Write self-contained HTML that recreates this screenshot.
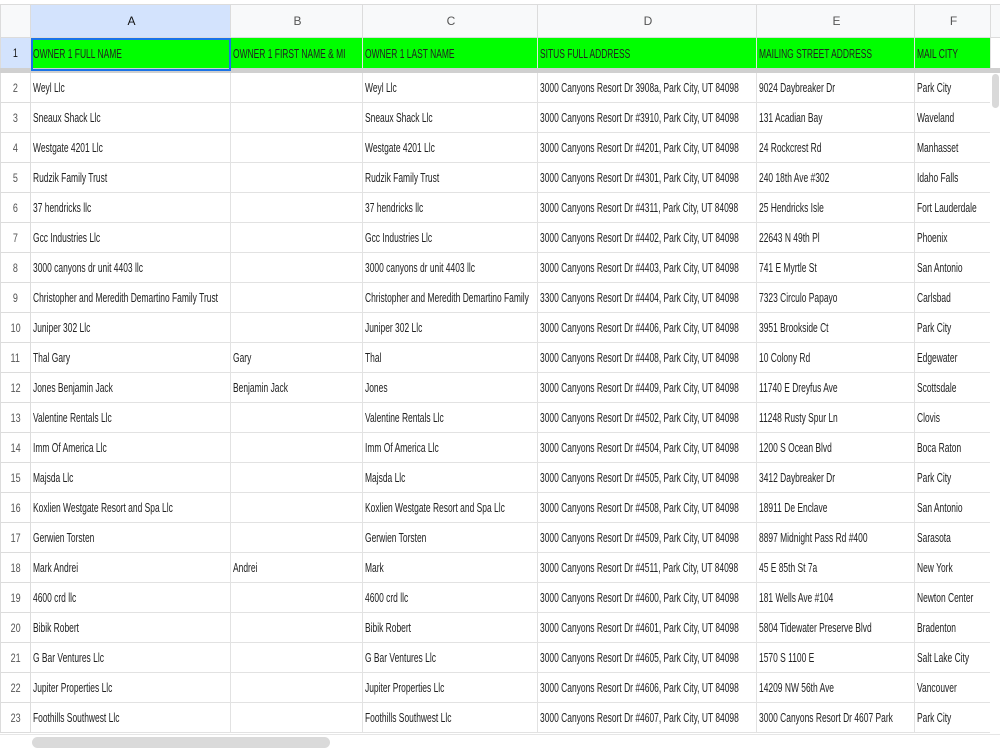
<!DOCTYPE html>
<html><head><style>
body{margin:0;width:1000px;height:750px;overflow:hidden;background:#fff;font-family:"Liberation Sans",sans-serif;font-size:13px;color:#222;position:relative}
table{border-collapse:collapse;table-layout:fixed;position:absolute;left:0;top:4px;width:1000px}
td{border:1px solid #e2e2e2;white-space:nowrap;overflow:hidden;padding:0 0 0 2px;height:29px}
td span{display:inline-block;transform:scaleX(0.65);transform-origin:0 50%}
td.n{text-align:center;color:#555;font-size:12px;background:#fff;padding:0;border-color:#dcdcdc}
td.n span{transform:scaleX(0.75);transform-origin:50% 50%}
tr.h td{background:#f8f9fa;color:#555;text-align:center;font-size:12px;height:32px;border-color:#dcdcdc}
tr.h td.sel{background:#d3e3fd;color:#111}
tr.g td{background:#00ff00;height:30px;border-bottom:5px solid #d0d0d0}
tr.g td.n{background:#d3e3fd;color:#111}
tr.g td.a{outline:2px solid #1a73e8;outline-offset:-2px}
#vs{position:absolute;left:990px;top:73px;width:10px;height:661px;background:#fff}
#vt{position:absolute;left:992px;top:74px;width:7px;height:34px;background:#d9d9d9;border-radius:4px}
#hs{position:absolute;left:0;top:734px;width:1000px;height:16px;background:#fff;border-top:1px solid #e6e6e6}
#ht{position:absolute;left:32px;top:737px;width:298px;height:11px;background:#dadada;border-radius:6px}
</style></head><body>
<table>
<colgroup><col style="width:30px"><col style="width:200px"><col style="width:132px"><col style="width:175px"><col style="width:219px"><col style="width:158px"><col style="width:76px"><col style="width:10px"></colgroup>
<tr class="h"><td class="n" style="background:#f8f9fa"></td><td class="sel">A</td><td>B</td><td>C</td><td>D</td><td>E</td><td>F</td><td></td></tr>
<tr class="g"><td class="n"><span>1</span></td><td class="a"><span>OWNER 1 FULL NAME</span></td><td><span>OWNER 1 FIRST NAME &amp; MI</span></td><td><span>OWNER 1 LAST NAME</span></td><td><span>SITUS FULL ADDRESS</span></td><td><span>MAILING STREET ADDRESS</span></td><td><span>MAIL CITY</span></td><td style="background:#fff"></td></tr>
<tr><td class="n"><span>2</span></td><td><span>Weyl Llc</span></td><td></td><td><span>Weyl Llc</span></td><td><span>3000 Canyons Resort Dr 3908a, Park City, UT 84098</span></td><td><span>9024 Daybreaker Dr</span></td><td><span>Park City</span></td><td></td></tr>
<tr><td class="n"><span>3</span></td><td><span>Sneaux Shack Llc</span></td><td></td><td><span>Sneaux Shack Llc</span></td><td><span>3000 Canyons Resort Dr #3910, Park City, UT 84098</span></td><td><span>131 Acadian Bay</span></td><td><span>Waveland</span></td><td></td></tr>
<tr><td class="n"><span>4</span></td><td><span>Westgate 4201 Llc</span></td><td></td><td><span>Westgate 4201 Llc</span></td><td><span>3000 Canyons Resort Dr #4201, Park City, UT 84098</span></td><td><span>24 Rockcrest Rd</span></td><td><span>Manhasset</span></td><td></td></tr>
<tr><td class="n"><span>5</span></td><td><span>Rudzik Family Trust</span></td><td></td><td><span>Rudzik Family Trust</span></td><td><span>3000 Canyons Resort Dr #4301, Park City, UT 84098</span></td><td><span>240 18th Ave #302</span></td><td><span>Idaho Falls</span></td><td></td></tr>
<tr><td class="n"><span>6</span></td><td><span>37 hendricks llc</span></td><td></td><td><span>37 hendricks llc</span></td><td><span>3000 Canyons Resort Dr #4311, Park City, UT 84098</span></td><td><span>25 Hendricks Isle</span></td><td><span>Fort Lauderdale</span></td><td></td></tr>
<tr><td class="n"><span>7</span></td><td><span>Gcc Industries Llc</span></td><td></td><td><span>Gcc Industries Llc</span></td><td><span>3000 Canyons Resort Dr #4402, Park City, UT 84098</span></td><td><span>22643 N 49th Pl</span></td><td><span>Phoenix</span></td><td></td></tr>
<tr><td class="n"><span>8</span></td><td><span>3000 canyons dr unit 4403 llc</span></td><td></td><td><span>3000 canyons dr unit 4403 llc</span></td><td><span>3000 Canyons Resort Dr #4403, Park City, UT 84098</span></td><td><span>741 E Myrtle St</span></td><td><span>San Antonio</span></td><td></td></tr>
<tr><td class="n"><span>9</span></td><td><span>Christopher and Meredith Demartino Family Trust</span></td><td></td><td><span>Christopher and Meredith Demartino Family</span></td><td><span>3300 Canyons Resort Dr #4404, Park City, UT 84098</span></td><td><span>7323 Circulo Papayo</span></td><td><span>Carlsbad</span></td><td></td></tr>
<tr><td class="n"><span>10</span></td><td><span>Juniper 302 Llc</span></td><td></td><td><span>Juniper 302 Llc</span></td><td><span>3000 Canyons Resort Dr #4406, Park City, UT 84098</span></td><td><span>3951 Brookside Ct</span></td><td><span>Park City</span></td><td></td></tr>
<tr><td class="n"><span>11</span></td><td><span>Thal Gary</span></td><td><span>Gary</span></td><td><span>Thal</span></td><td><span>3000 Canyons Resort Dr #4408, Park City, UT 84098</span></td><td><span>10 Colony Rd</span></td><td><span>Edgewater</span></td><td></td></tr>
<tr><td class="n"><span>12</span></td><td><span>Jones Benjamin Jack</span></td><td><span>Benjamin Jack</span></td><td><span>Jones</span></td><td><span>3000 Canyons Resort Dr #4409, Park City, UT 84098</span></td><td><span>11740 E Dreyfus Ave</span></td><td><span>Scottsdale</span></td><td></td></tr>
<tr><td class="n"><span>13</span></td><td><span>Valentine Rentals Llc</span></td><td></td><td><span>Valentine Rentals Llc</span></td><td><span>3000 Canyons Resort Dr #4502, Park City, UT 84098</span></td><td><span>11248 Rusty Spur Ln</span></td><td><span>Clovis</span></td><td></td></tr>
<tr><td class="n"><span>14</span></td><td><span>Imm Of America Llc</span></td><td></td><td><span>Imm Of America Llc</span></td><td><span>3000 Canyons Resort Dr #4504, Park City, UT 84098</span></td><td><span>1200 S Ocean Blvd</span></td><td><span>Boca Raton</span></td><td></td></tr>
<tr><td class="n"><span>15</span></td><td><span>Majsda Llc</span></td><td></td><td><span>Majsda Llc</span></td><td><span>3000 Canyons Resort Dr #4505, Park City, UT 84098</span></td><td><span>3412 Daybreaker Dr</span></td><td><span>Park City</span></td><td></td></tr>
<tr><td class="n"><span>16</span></td><td><span>Koxlien Westgate Resort and Spa Llc</span></td><td></td><td><span>Koxlien Westgate Resort and Spa Llc</span></td><td><span>3000 Canyons Resort Dr #4508, Park City, UT 84098</span></td><td><span>18911 De Enclave</span></td><td><span>San Antonio</span></td><td></td></tr>
<tr><td class="n"><span>17</span></td><td><span>Gerwien Torsten</span></td><td></td><td><span>Gerwien Torsten</span></td><td><span>3000 Canyons Resort Dr #4509, Park City, UT 84098</span></td><td><span>8897 Midnight Pass Rd #400</span></td><td><span>Sarasota</span></td><td></td></tr>
<tr><td class="n"><span>18</span></td><td><span>Mark Andrei</span></td><td><span>Andrei</span></td><td><span>Mark</span></td><td><span>3000 Canyons Resort Dr #4511, Park City, UT 84098</span></td><td><span>45 E 85th St 7a</span></td><td><span>New York</span></td><td></td></tr>
<tr><td class="n"><span>19</span></td><td><span>4600 crd llc</span></td><td></td><td><span>4600 crd llc</span></td><td><span>3000 Canyons Resort Dr #4600, Park City, UT 84098</span></td><td><span>181 Wells Ave #104</span></td><td><span>Newton Center</span></td><td></td></tr>
<tr><td class="n"><span>20</span></td><td><span>Bibik Robert</span></td><td></td><td><span>Bibik Robert</span></td><td><span>3000 Canyons Resort Dr #4601, Park City, UT 84098</span></td><td><span>5804 Tidewater Preserve Blvd</span></td><td><span>Bradenton</span></td><td></td></tr>
<tr><td class="n"><span>21</span></td><td><span>G Bar Ventures Llc</span></td><td></td><td><span>G Bar Ventures Llc</span></td><td><span>3000 Canyons Resort Dr #4605, Park City, UT 84098</span></td><td><span>1570 S 1100 E</span></td><td><span>Salt Lake City</span></td><td></td></tr>
<tr><td class="n"><span>22</span></td><td><span>Jupiter Properties Llc</span></td><td></td><td><span>Jupiter Properties Llc</span></td><td><span>3000 Canyons Resort Dr #4606, Park City, UT 84098</span></td><td><span>14209 NW 56th Ave</span></td><td><span>Vancouver</span></td><td></td></tr>
<tr><td class="n"><span>23</span></td><td><span>Foothills Southwest Llc</span></td><td></td><td><span>Foothills Southwest Llc</span></td><td><span>3000 Canyons Resort Dr #4607, Park City, UT 84098</span></td><td><span>3000 Canyons Resort Dr 4607 Park</span></td><td><span>Park City</span></td><td></td></tr>
</table>
<div id="vs"></div><div id="vt"></div>
<div id="hs"></div><div id="ht"></div>
</body></html>
